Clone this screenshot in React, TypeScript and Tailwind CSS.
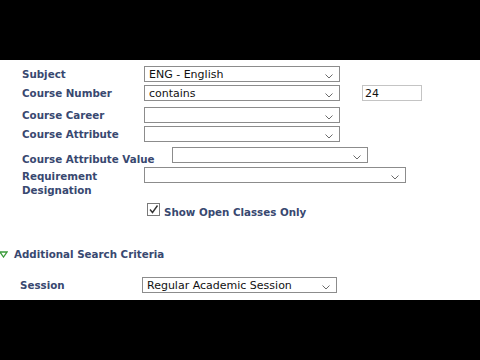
import React from 'react';

const font = { fontFamily: '"DejaVu Sans", Verdana, sans-serif' };

function Chevron() {
  return (
    <svg width="8" height="5" viewBox="0 0 8 5" className="mt-[5px] shrink-0">
      <path d="M0.5 0.5 L4 4 L7.5 0.5" fill="none" stroke="#6b6b6b" strokeWidth="1" />
    </svg>
  );
}

function Select({ value = '', className = '' }: { value?: string; className?: string }) {
  return (
    <div
      className={`h-[16px] shrink-0 border border-[#8c8c8c] bg-white flex items-center justify-between pl-[4px] pr-[6px] text-[11px] leading-none text-[#111] ${className}`}
    >
      <span>{value}</span>
      <Chevron />
    </div>
  );
}

function Label({ children, className = '' }: { children: React.ReactNode; className?: string }) {
  return (
    <div className={`text-[10.3px] font-bold text-[#384870] leading-[14px] shrink-0 ${className}`}>
      {children}
    </div>
  );
}

export default function App() {
  return (
    <div className="w-[480px] h-[360px] bg-black overflow-hidden flex flex-col" style={font}>
      <div className="h-[60px] shrink-0" />
      <div className="h-[240px] shrink-0 bg-white flex flex-col">
        <div className="flex items-center mt-[6px] pl-[22px]">
          <Label className="w-[122px]">Subject</Label>
          <Select value="ENG - English" className="w-[196px]" />
        </div>
        <div className="flex items-center mt-[3px] pl-[22px]">
          <Label className="w-[122px]">Course Number</Label>
          <Select value="contains" className="w-[196px]" />
          <div className="ml-[22px] w-[60px] h-[16px] border border-[#c4c4c4] text-[11px] leading-none flex items-center pl-[2px] text-[#111]">
            24
          </div>
        </div>
        <div className="flex items-center mt-[6px] pl-[22px]">
          <Label className="w-[122px]">Course Career</Label>
          <Select className="w-[196px]" />
        </div>
        <div className="flex items-center mt-[3px] pl-[22px]">
          <Label className="w-[122px]">Course Attribute</Label>
          <Select className="w-[196px]" />
        </div>
        <div className="flex items-start mt-[5px] pl-[22px]">
          <Label className="w-[150px] mt-[5px]">Course Attribute Value</Label>
          <Select className="w-[196px]" />
        </div>
        <div className="flex items-start mt-[1px] pl-[22px]">
          <Label className="w-[122px] mt-[2px]">
            Requirement
            <br />
            Designation
          </Label>
          <Select className="w-[262px]" />
        </div>
        <div className="flex items-start mt-[6px] pl-[147px] h-[20px]">
          <div className="w-[13px] h-[13px] border border-[#7a7a7a] bg-white flex items-center justify-center">
            <svg width="11" height="11" viewBox="0 0 11 11">
              <path d="M2 5.5 L4.5 8.5 L9.5 1.5" fill="none" stroke="#333" strokeWidth="1.4" />
            </svg>
          </div>
          <span className="ml-[4px] mt-[2px] text-[10.3px] font-bold text-[#384870] leading-[14px]">
            Show Open Classes Only
          </span>
        </div>
        <div className="flex items-center mt-[24px]">
          <svg width="9" height="7" viewBox="0 0 9 7" className="ml-[-1px]">
            <path d="M1 1 L8 1 L4.5 6 Z" fill="none" stroke="#3a9a3a" strokeWidth="1.3" />
          </svg>
          <span className="ml-[6px] text-[10.3px] font-bold text-[#384870] leading-[14px]">
            Additional Search Criteria
          </span>
        </div>
        <div className="flex items-center mt-[16px] pl-[20px]">
          <Label className="w-[122px]">Session</Label>
          <Select value="Regular Academic Session" className="w-[195px]" />
        </div>
      </div>
    </div>
  );
}
